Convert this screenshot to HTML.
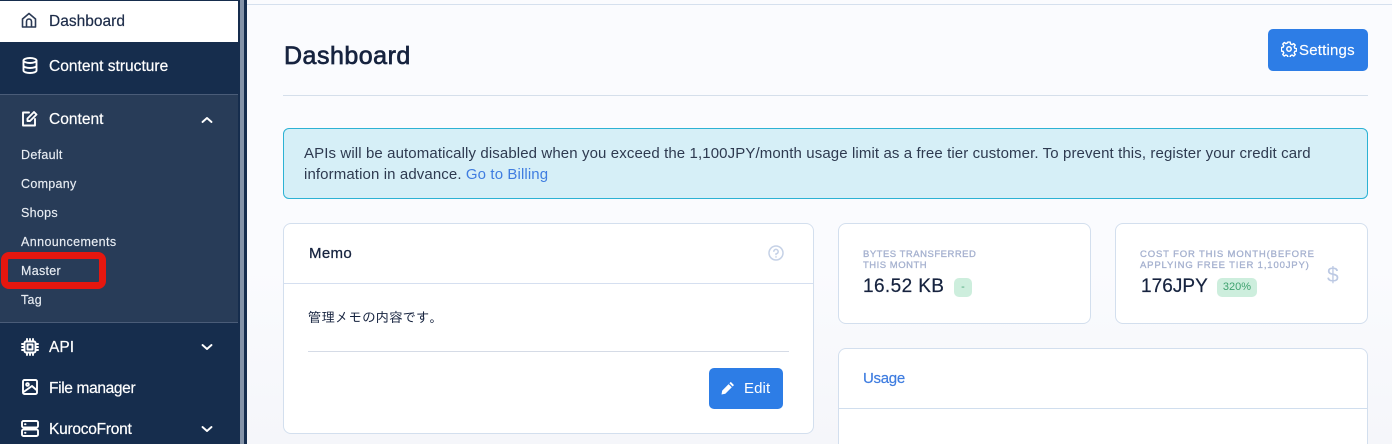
<!DOCTYPE html>
<html lang="en"><head><meta charset="utf-8"><title>Dashboard</title>
<style>
*{box-sizing:border-box}
html,body{margin:0;padding:0;width:1392px;height:444px;overflow:hidden;background:#fafbfe;font-family:"Liberation Sans","Noto Sans CJK JP",sans-serif;color:#16233f}
#p{position:relative;width:1392px;height:444px;overflow:hidden}
.a{position:absolute;white-space:nowrap}
.n{position:absolute;left:49px;font-size:15.5px;line-height:20px;color:#fff;white-space:nowrap;letter-spacing:.02px;-webkit-text-stroke:.2px #fff}
.s{position:absolute;left:21px;font-size:12.5px;line-height:16px;color:#e8edf3;white-space:nowrap;letter-spacing:.3px;-webkit-text-stroke:.15px #e8edf3}
.card{position:absolute;background:#fff;border:1px solid #d3dfee;border-radius:8px}
.ic{position:absolute;fill:none;stroke:#fff;stroke-width:1.9;stroke-linecap:round;stroke-linejoin:round}
.lab{position:absolute;font-size:9.5px;line-height:11px;color:#a5b1cf;white-space:nowrap;-webkit-text-stroke:.3px #a5b1cf}
</style></head><body><div id="p">
<div class="a" style="left:0;top:0;width:247px;height:444px;background:#162d4d"></div>
<div class="a" style="left:0;top:94px;width:238px;height:229px;background:#283c58;border-top:1px solid #4a5c78;border-bottom:1px solid #4a5c78"></div>
<div class="a" style="left:0;top:1px;width:238px;height:41px;background:#fff"></div>
<div class="a" style="left:240px;top:0;width:4px;height:444px;background:#8493a8"></div>
<div class="a" style="left:247px;top:0;width:1145px;height:444px;background:linear-gradient(#fafbfe 60%,#f5f6fa)"></div>
<div class="a" style="left:247px;top:4px;width:1145px;height:1px;background:#d5e0ee"></div>

<svg class="ic" style="left:21px;top:12px;stroke:#2b3a55;stroke-width:1.6" width="16" height="17" viewBox="0 0 16 17"><path d="M1.500 7 8 1.500 14.500 7V15H1.500ZM5.500 15V9.500A2.500 2.500 0 0 1 10.500 9.500V15"/></svg>
<div class="n" style="top:12px;color:#1d2c49;-webkit-text-stroke:.2px #1d2c49">Dashboard</div>
<svg class="ic" style="left:22px;top:57px" width="16" height="17" viewBox="0 0 16 17"><ellipse cx="8" cy="3.500" rx="6.500" ry="2.500"/><path d="M1.500 3.500V13.500C1.500 15 4.500 16 8 16S14.500 15 14.500 13.500V3.500M1.500 8.500C1.500 10 4.500 11 8 11S14.500 10 14.500 8.500"/></svg>
<div class="n" style="top:57px">Content structure</div>
<svg class="ic" style="left:21px;top:110px" width="17" height="17" viewBox="0 0 17 17"><path d="M8 2.500H2V15.500H14V9M6.500 8.500 13 2l2.500 2.500L9 11H6.500Z"/></svg>
<div class="n" style="top:110px">Content</div>
<svg class="ic" style="left:201px;top:116px" width="12" height="8" viewBox="0 0 12 8"><path d="M1.500 6 6 2l4.500 4"/></svg>
<div class="s" style="top:147px">Default</div>
<div class="s" style="top:176px">Company</div>
<div class="s" style="top:205px">Shops</div>
<div class="s" style="top:234px;letter-spacing:.4px">Announcements</div>
<div class="s" style="top:263px">Master</div>
<div class="s" style="top:292px">Tag</div>
<div class="a" style="left:1px;top:252px;width:105px;height:37px;border:7px solid #e5170f;border-radius:8px"></div>
<svg class="ic" style="left:21px;top:338px" width="18" height="18" viewBox="0 0 18 18"><rect x="3.500" y="3.500" width="11" height="11" rx="1.500"/><rect x="6.500" y="6.500" width="5" height="5"/><path d="M6 1v2M9 1v2M12 1v2M6 15v2M9 15v2M12 15v2M1 6h2M1 9h2M1 12h2M15 6h2M15 9h2M15 12h2"/></svg>
<div class="n" style="top:338px">API</div>
<svg class="ic" style="left:201px;top:343px" width="12" height="8" viewBox="0 0 12 8"><path d="M1.500 2 6 6l4.500-4"/></svg>
<svg class="ic" style="left:22px;top:379px" width="16" height="16" viewBox="0 0 16 16"><rect x="1" y="1" width="14" height="14" rx="1.500"/><circle cx="5.500" cy="5.500" r="1.300"/><path d="M1.500 13 10 7l4.500 4"/></svg>
<div class="n" style="top:379px;letter-spacing:-.35px">File manager</div>
<svg class="ic" style="left:21px;top:420px" width="18" height="17" viewBox="0 0 18 17"><rect x="1" y="1" width="16" height="6.500" rx="1.500"/><rect x="1" y="9.500" width="16" height="6.500" rx="1.500"/><path d="M4 4.200h.5M4 12.800h.5"/></svg>
<div class="n" style="top:420px;letter-spacing:-.25px">KurocoFront</div>
<svg class="ic" style="left:201px;top:425px" width="12" height="8" viewBox="0 0 12 8"><path d="M1.500 2 6 6l4.500-4"/></svg>

<div class="a" style="left:284px;top:40px;font-size:25px;line-height:32px;color:#16233f;letter-spacing:.5px;-webkit-text-stroke:.7px #16233f">Dashboard</div>
<div class="a" style="left:1268px;top:29px;width:100px;height:42px;background:#2d7de6;border-radius:5px"></div>
<svg class="ic" style="left:1281px;top:41px;stroke-width:1.500" width="16" height="16" viewBox="0 0 16 16"><circle cx="8" cy="8" r="2.200"/><path d="M6.800 1h2.400l.4 2 1.600.7 1.700-1.100 1.600 1.600-1.100 1.700.7 1.600 1.900.4v2.400l-1.900.4-.7 1.600 1.100 1.700-1.600 1.600-1.700-1.100-1.600.7-.4 1.900H6.800l-.4-1.900-1.600-.7-1.700 1.100-1.600-1.600 1.100-1.700-.7-1.600-1.900-.4V6.800l1.900-.4.700-1.600-1.100-1.700 1.600-1.600 1.700 1.100 1.600-.7Z" transform="translate(.3 .1) scale(.96)"/></svg>
<div class="a" style="left:1299px;top:41px;font-size:15px;line-height:20px;color:#fff;letter-spacing:.2px;-webkit-text-stroke:.15px #fff">Settings</div>
<div class="a" style="left:283px;top:95px;width:1085px;height:1px;background:#d5dfeb"></div>

<div class="a" style="left:283px;top:128px;width:1085px;height:71px;background:#d6eff7;border:1px solid #2cb2d4;border-radius:6px"></div>
<div class="a" style="left:304px;top:143px;font-size:15px;line-height:21px;color:#2e3a50;letter-spacing:.11px">APIs will be automatically disabled when you exceed the 1,100JPY/month usage limit as a free tier customer. To prevent this, register your credit card</div>
<div class="a" style="left:304px;top:164px;font-size:15px;line-height:21px;color:#2e3a50;letter-spacing:.11px">information in advance. <span style="color:#3f7de0">Go to Billing</span></div>

<div class="card" style="left:283px;top:223px;width:531px;height:211px"></div>
<div class="a" style="left:284px;top:283px;width:529px;height:1px;background:#d5dff0"></div>
<div class="a" style="left:309px;top:244px;font-size:15px;line-height:20px;color:#16233f;letter-spacing:.35px;-webkit-text-stroke:.3px #16233f">Memo</div>
<svg class="ic" style="left:768px;top:245px;stroke:#c5d1e6;stroke-width:1.500" width="16" height="16" viewBox="0 0 16 16"><circle cx="8" cy="8" r="7"/><path d="M5.800 6.200A2.200 2.200 0 1 1 8 8.800V9.500M8 11.800v.2"/></svg>
<div class="a" style="left:308px;top:307px;font-family:'IPAGothic','Noto Sans CJK JP',sans-serif;font-size:13.500px;line-height:20px;color:#16233f">管理メモの内容です。</div>
<div class="a" style="left:308px;top:351px;width:481px;height:1px;background:#d5dbe6"></div>
<div class="a" style="left:709px;top:368px;width:74px;height:41px;background:#2d7de6;border-radius:5px"></div>
<svg class="a" style="left:721px;top:381px" width="14" height="14" viewBox="0 0 14 14"><path fill="#fff" d="M9.800.9 13 4.100 11.600 5.500 8.400 2.300ZM7.600 3.100 10.800 6.300 4.300 12.800.5 13.500 1.200 9.600Z"/></svg>
<div class="a" style="left:744px;top:379px;font-size:15px;line-height:20px;color:#fff;letter-spacing:.1px">Edit</div>

<div class="card" style="left:838px;top:223px;width:253px;height:101px"></div>
<div class="lab" style="left:863px;top:249px;letter-spacing:.5px">BYTES TRANSFERRED<br>THIS MONTH</div>
<div class="a" style="left:863px;top:275px;font-size:19px;line-height:24px;color:#16233f;letter-spacing:.4px;-webkit-text-stroke:.2px #16233f">16.52 KB</div>
<div class="a" style="left:954px;top:278px;width:18px;height:19px;background:#cdeedd;border-radius:5px;color:#50ab80;font-size:11px;line-height:19px;text-align:center">-</div>

<div class="card" style="left:1115px;top:223px;width:253px;height:101px"></div>
<div class="lab" style="left:1140px;top:249px;letter-spacing:.85px">COST FOR THIS MONTH(BEFORE<br>APPLYING FREE TIER 1,100JPY)</div>
<div class="a" style="left:1141px;top:275px;font-size:19px;line-height:24px;color:#16233f;letter-spacing:.05px;-webkit-text-stroke:.2px #16233f">176JPY</div>
<div class="a" style="left:1217px;top:278px;width:40px;height:19px;background:#cdeedd;border-radius:5px;color:#3fa26f;font-size:11px;line-height:19px;text-align:center">320%</div>
<div class="a" style="left:1327px;top:262px;font-size:21px;line-height:28px;color:#bcc9e3">$</div>

<div class="a" style="left:838px;top:348px;width:530px;height:96px;background:#fff;border:1px solid #d3dfee;border-bottom:none;border-radius:8px 8px 0 0"></div>
<div class="a" style="left:839px;top:408px;width:528px;height:1px;background:#d0deee"></div>
<div class="a" style="left:863px;top:369px;font-size:15px;line-height:20px;color:#3f7de0;letter-spacing:-.3px;-webkit-text-stroke:.2px #3f7de0">Usage</div>
</div></body></html>
